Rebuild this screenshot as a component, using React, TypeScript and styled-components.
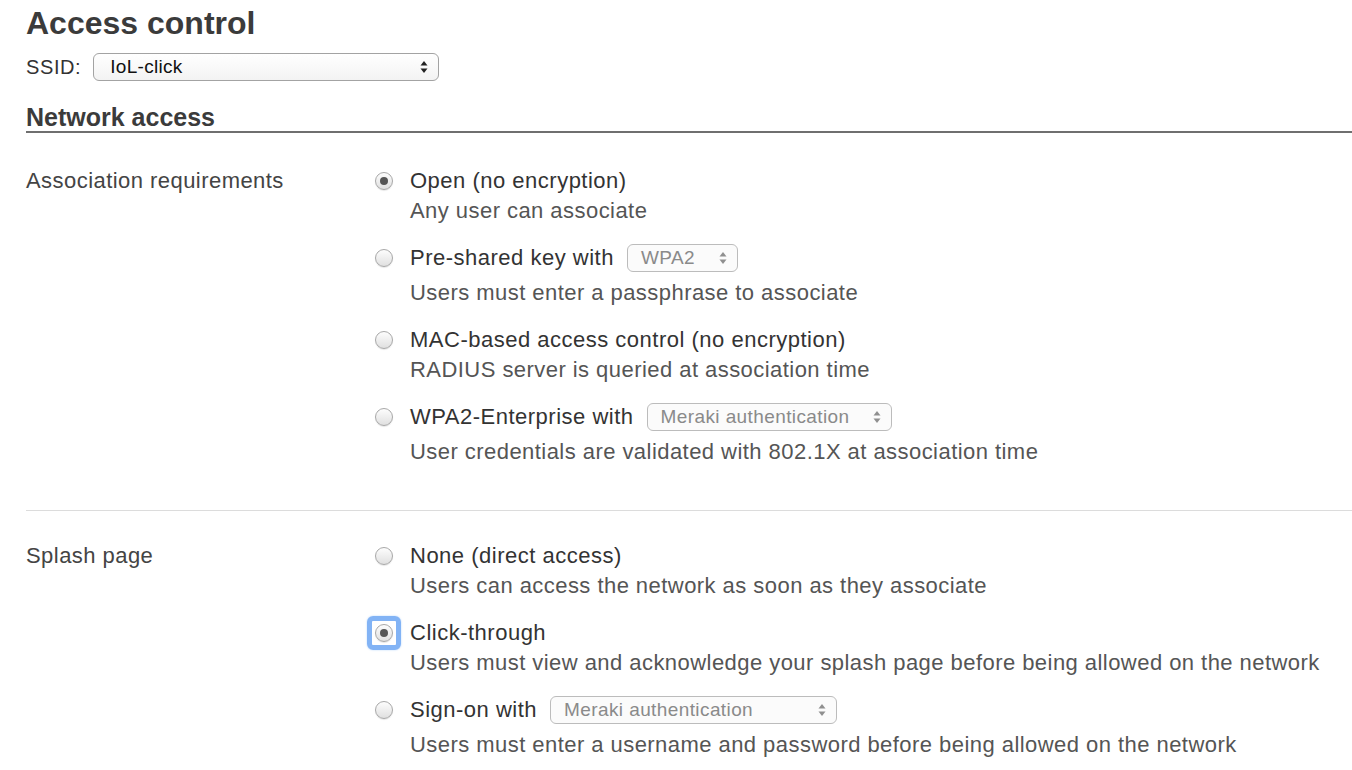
import React from "react";
import styled, { createGlobalStyle } from "styled-components";

const GlobalStyle = createGlobalStyle`
  html, body {
    margin: 0;
    padding: 0;
    background: #ffffff;
  }
  body {
    font-family: "Liberation Sans", Arial, Helvetica, sans-serif;
    color: #333333;
  }
`;

const Page = styled.div`
  padding: 4px 0 0 26px;
  overflow: hidden;
`;

const Title = styled.h1`
  margin: 0;
  font-size: 32px;
  line-height: 38px;
  font-weight: bold;
  color: #3b3b3b;
`;

const SsidRow = styled.div`
  display: flex;
  align-items: center;
  gap: 12px;
  margin-top: 11px;
  font-size: 20px;
  letter-spacing: 0.6px;
  color: #333;
`;

const SectionHeading = styled.h2`
  margin: 22px -40px 0 0;
  font-size: 25px;
  line-height: 28px;
  font-weight: bold;
  color: #3b3b3b;
  padding-bottom: 0;
  border-bottom: 2px solid #6f6f6f;
`;

const Section = styled.div<{ divider?: boolean }>`
  display: grid;
  grid-template-columns: 349px 1fr;
  padding: ${({ divider }) => (divider ? "30px 0 0" : "33px 0 43px")};
  border-top: ${({ divider }) => (divider ? "1px solid #dcdcdc" : "none")};
  margin-right: -40px;
`;

const Label = styled.div`
  font-size: 22px;
  letter-spacing: 0.45px;
  line-height: 30px;
  color: #444;
`;

const Options = styled.div`
  display: flex;
  flex-direction: column;
  gap: 17px;
`;

const Option = styled.div`
  display: grid;
  grid-template-columns: 35px 1fr;
`;

const RadioCell = styled.div`
  display: flex;
  align-items: center;
  height: 30px;
`;

const OptionTitle = styled.div<{ withSelect?: boolean }>`
  display: flex;
  align-items: center;
  gap: 13px;
  height: 30px;
  margin-bottom: ${({ withSelect }) => (withSelect ? "5px" : "0")};
  font-size: 22px;
  letter-spacing: 0.5px;
  color: #333;
  white-space: nowrap;
`;

const Description = styled.div`
  grid-column: 2;
  font-size: 22px;
  letter-spacing: 0.45px;
  line-height: 30px;
  color: #555;
  white-space: nowrap;
`;

const RadioWrap = styled.span<{ focused?: boolean }>`
  position: relative;
  display: inline-flex;
  width: 18px;
  height: 18px;

  &::before {
    content: "";
    display: ${({ focused }) => (focused ? "block" : "none")};
    position: absolute;
    inset: -8px;
    border-radius: 6px;
    border: 5px solid #82b3f5;
    box-shadow: 0 0 2px #b4d3fb;
  }
`;

const RadioCircle = styled.span<{ checked?: boolean }>`
  position: relative;
  width: 18px;
  height: 18px;
  box-sizing: border-box;
  border-radius: 50%;
  border: 1px solid #a8a8a8;
  background: linear-gradient(#fdfdfd, #e0e0e0);
  box-shadow: 0 1px 1px rgba(0, 0, 0, 0.1);

  &::after {
    content: "";
    display: ${({ checked }) => (checked ? "block" : "none")};
    position: absolute;
    left: 50%;
    top: 50%;
    width: 8px;
    height: 8px;
    margin: -4px 0 0 -4px;
    border-radius: 50%;
    background: #555555;
  }
`;

const SelectBox = styled.div<{ width: number; disabled?: boolean }>`
  display: inline-flex;
  align-items: center;
  justify-content: space-between;
  box-sizing: border-box;
  width: ${({ width }) => width}px;
  height: 28px;
  padding: 0 10px 0 ${({ disabled }) => (disabled ? "13px" : "16px")};
  border: 1px solid ${({ disabled }) => (disabled ? "#bcbcbc" : "#a3a3a3")};
  border-radius: 6px;
  background: ${({ disabled }) =>
    disabled ? "#fbfbfb" : "linear-gradient(#ffffff, #f3f3f3)"};
  font-size: 19px;
  letter-spacing: ${({ disabled }) => (disabled ? "0.4px" : "0.3px")};
  color: ${({ disabled }) => (disabled ? "#8a8a8a" : "#111")};
`;

const Arrows = ({ color }: { color: string }) => (
  <svg width="8" height="14" viewBox="0 0 8 14">
    <path d="M4 1 L7.5 5.5 H0.5 Z" fill={color} />
    <path d="M4 13 L7.5 8.5 H0.5 Z" fill={color} />
  </svg>
);

const Select = ({
  value,
  width,
  disabled,
}: {
  value: string;
  width: number;
  disabled?: boolean;
}) => (
  <SelectBox width={width} disabled={disabled}>
    <span>{value}</span>
    <Arrows color={disabled ? "#8f8f8f" : "#222"} />
  </SelectBox>
);

type OptionData = {
  title: string;
  desc: string;
  checked?: boolean;
  focused?: boolean;
  select?: { value: string; width: number };
};

const association: OptionData[] = [
  { title: "Open (no encryption)", desc: "Any user can associate", checked: true },
  {
    title: "Pre-shared key with",
    desc: "Users must enter a passphrase to associate",
    select: { value: "WPA2", width: 111 },
  },
  {
    title: "MAC-based access control (no encryption)",
    desc: "RADIUS server is queried at association time",
  },
  {
    title: "WPA2-Enterprise with",
    desc: "User credentials are validated with 802.1X at association time",
    select: { value: "Meraki authentication", width: 245 },
  },
];

const splash: OptionData[] = [
  {
    title: "None (direct access)",
    desc: "Users can access the network as soon as they associate",
  },
  {
    title: "Click-through",
    desc: "Users must view and acknowledge your splash page before being allowed on the network",
    checked: true,
    focused: true,
  },
  {
    title: "Sign-on with",
    desc: "Users must enter a username and password before being allowed on the network",
    select: { value: "Meraki authentication", width: 287 },
  },
];

const RadioOption = ({ opt }: { opt: OptionData }) => (
  <Option>
    <RadioCell>
      <RadioWrap focused={opt.focused}>
        <RadioCircle checked={opt.checked} />
      </RadioWrap>
    </RadioCell>
    <OptionTitle withSelect={!!opt.select}>
      <span>{opt.title}</span>
      {opt.select && (
        <Select value={opt.select.value} width={opt.select.width} disabled />
      )}
    </OptionTitle>
    <Description>{opt.desc}</Description>
  </Option>
);

export default function App() {
  return (
    <>
      <GlobalStyle />
      <Page>
        <Title>Access control</Title>
        <SsidRow>
          <span>SSID:</span>
          <Select value="IoL-click" width={346} />
        </SsidRow>
        <SectionHeading>Network access</SectionHeading>
        <Section>
          <Label>Association requirements</Label>
          <Options>
            {association.map((o) => (
              <RadioOption key={o.title} opt={o} />
            ))}
          </Options>
        </Section>
        <Section divider>
          <Label>Splash page</Label>
          <Options>
            {splash.map((o) => (
              <RadioOption key={o.title} opt={o} />
            ))}
          </Options>
        </Section>
      </Page>
    </>
  );
}
